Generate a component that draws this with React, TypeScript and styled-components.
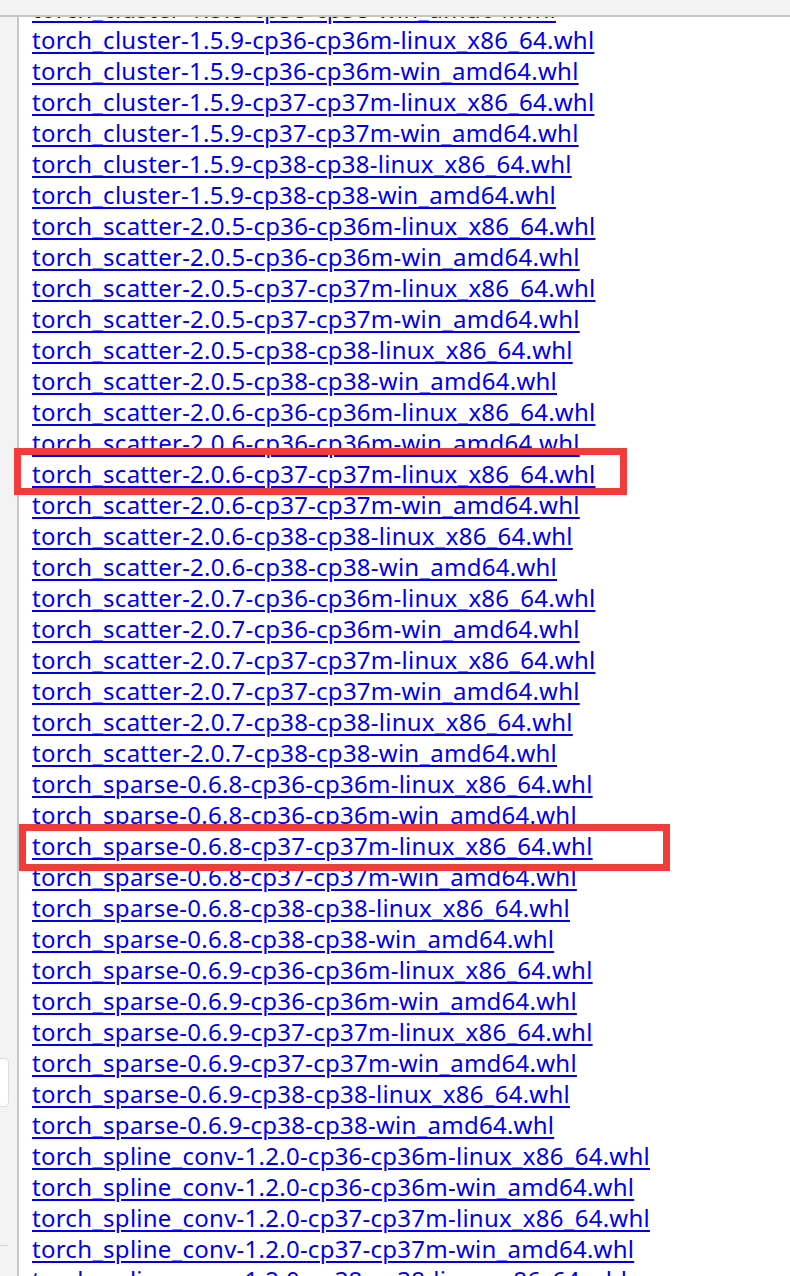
import * as React from 'react';
import styled, { createGlobalStyle } from 'styled-components';

const GlobalStyle = createGlobalStyle`
  html, body {
    margin: 0;
    padding: 0;
    background: #ffffff;
    overflow: hidden;
  }
`;

const Page = styled.div`
  width: 790px;
  height: 1276px;
  display: flex;
  flex-direction: column;
  overflow: hidden;
  position: relative;
`;

const TopBar = styled.div`
  height: 15px;
  flex: none;
  background: #f3f3f3;
  border-bottom: 2px solid #c6c6c6;
`;

const Body = styled.div`
  flex: 1;
  display: flex;
  overflow: hidden;
`;

const SideStrip = styled.div`
  width: 17px;
  flex: none;
  background: #f3f3f3;
  border-right: 2px solid #c6c6c6;
  display: flex;
  flex-direction: column;
`;

const SideTab = styled.div`
  margin-top: 1041px;
  width: 8px;
  height: 47px;
  background: #ffffff;
  border: 1px solid #dcdcdc;
  border-left: none;
  border-radius: 0 5px 5px 0;
`;

const SideRule = styled.div`
  margin-top: 138px;
  width: 8px;
  height: 1px;
  background: #d4d4d4;
`;

const Content = styled.div`
  flex: 1;
  overflow: hidden;
  position: relative;
`;

const FileList = styled.ul`
  list-style: none;
  margin: -24px 0 0 0;
  padding: 0 0 0 13px;
`;

const FileRow = styled.li`
  height: 31px;
  line-height: 31px;
`;

const FileLink = styled.a`
  font-family: "Noto Sans", "Open Sans", sans-serif;
  font-size: 24px;
  letter-spacing: 0.25px;
  color: #0000ee;
  text-decoration: underline;
  text-decoration-thickness: 2px;
  text-underline-offset: 3px;
  white-space: nowrap;
`;

const Highlight = styled.div<{ $x: number; $y: number; $w: number; $h: number }>`
  position: absolute;
  left: ${p => p.$x}px;
  top: ${p => p.$y}px;
  width: ${p => p.$w}px;
  height: ${p => p.$h}px;
  box-sizing: border-box;
  border: 7px solid #f23b3b;
  pointer-events: none;
`;

const packages: { name: string; py: string[] }[] = [
  { name: 'torch_cluster-1.5.9', py: ['36', '37', '38'] },
  { name: 'torch_scatter-2.0.5', py: ['36', '37', '38'] },
  { name: 'torch_scatter-2.0.6', py: ['36', '37', '38'] },
  { name: 'torch_scatter-2.0.7', py: ['36', '37', '38'] },
  { name: 'torch_sparse-0.6.8', py: ['36', '37', '38'] },
  { name: 'torch_sparse-0.6.9', py: ['36', '37', '38'] },
  { name: 'torch_spline_conv-1.2.0', py: ['36', '37', '38'] },
];

const wheels: string[] = ['torch_cluster-1.5.8-cp38-cp38-win_amd64.whl'];
packages.forEach(pkg => {
  pkg.py.forEach(v => {
    const abi = v === '38' ? 'cp38' : `cp${v}m`;
    wheels.push(`${pkg.name}-cp${v}-${abi}-linux_x86_64.whl`);
    wheels.push(`${pkg.name}-cp${v}-${abi}-win_amd64.whl`);
  });
});

export default function App() {
  return (
    <>
      <GlobalStyle />
      <Page>
        <TopBar />
        <Body>
          <SideStrip>
            <SideTab />
            <SideRule />
          </SideStrip>
          <Content>
            <FileList>
              {wheels.slice(0, 43).map(w => (
                <FileRow key={w}>
                  <FileLink href="#">{w}</FileLink>
                </FileRow>
              ))}
            </FileList>
          </Content>
        </Body>
        <Highlight $x={14} $y={448} $w={613} $h={47} />
        <Highlight $x={19} $y={824} $w={651} $h={47} />
      </Page>
    </>
  );
}
